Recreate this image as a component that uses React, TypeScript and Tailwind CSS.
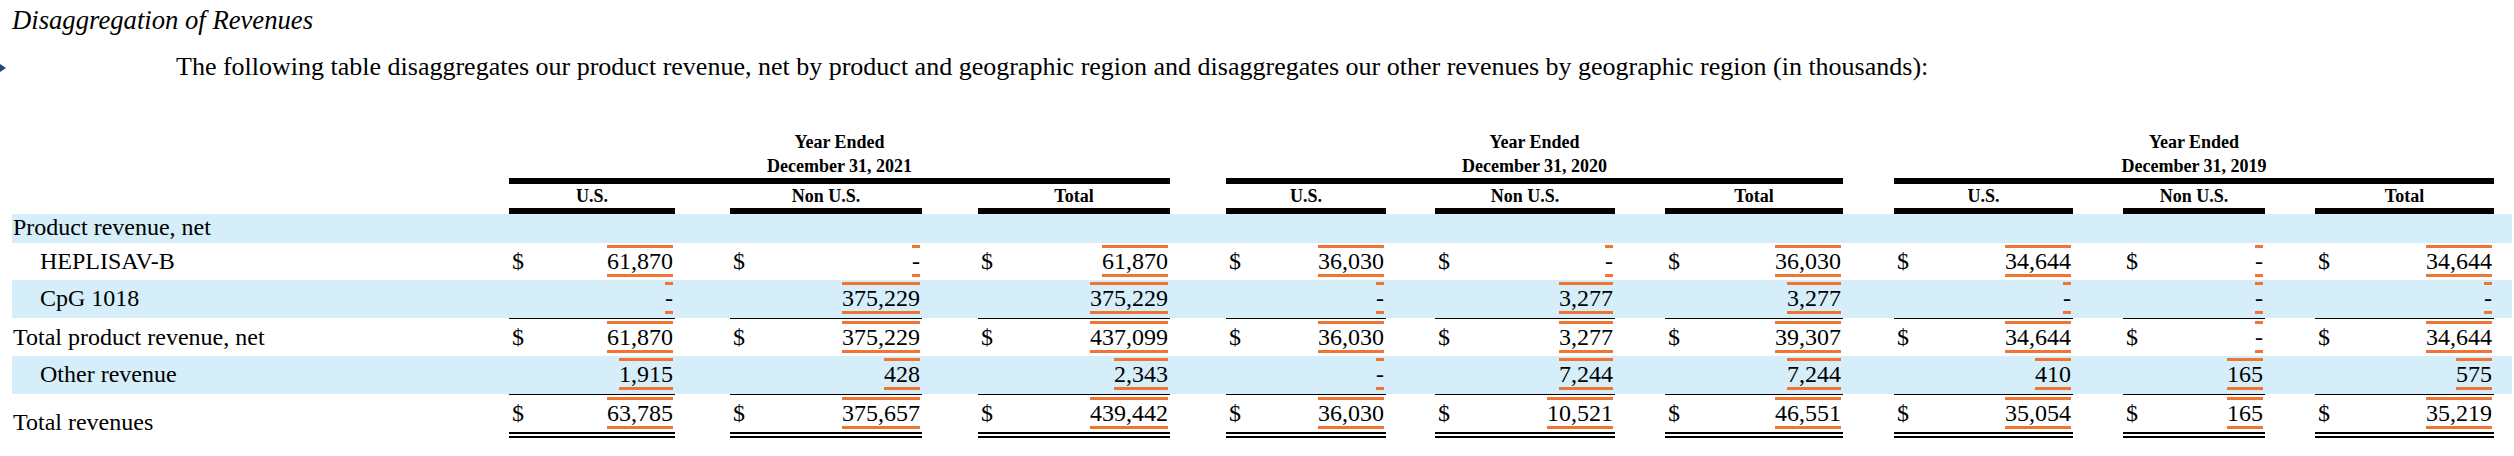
import clsx from "clsx";

const GRID =
  "grid grid-cols-[497px_166px_55px_192px_56px_192px_56px_160px_49px_180px_50px_178px_51px_179px_50px_142px_50px_179px_18px]";

const BAND = "bg-[#d5eefa]";

type Row = {
  label: string;
  indent?: boolean;
  band?: boolean;
  dollar?: boolean;
  top?: boolean;
  total?: boolean;
  values: string[];
};

const rows: Row[] = [
  {
    label: "HEPLISAV-B",
    indent: true,
    dollar: true,
    values: ["61,870", "-", "61,870", "36,030", "-", "36,030", "34,644", "-", "34,644"],
  },
  {
    label: "CpG 1018",
    indent: true,
    band: true,
    values: ["-", "375,229", "375,229", "-", "3,277", "3,277", "-", "-", "-"],
  },
  {
    label: "Total product revenue, net",
    dollar: true,
    top: true,
    values: ["61,870", "375,229", "437,099", "36,030", "3,277", "39,307", "34,644", "-", "34,644"],
  },
  {
    label: "Other revenue",
    indent: true,
    band: true,
    values: ["1,915", "428", "2,343", "-", "7,244", "7,244", "410", "165", "575"],
  },
  {
    label: "Total revenues",
    dollar: true,
    top: true,
    total: true,
    values: ["63,785", "375,657", "439,442", "36,030", "10,521", "46,551", "35,054", "165", "35,219"],
  },
];

const groups = ["December 31, 2021", "December 31, 2020", "December 31, 2019"];
const heads = ["U.S.", "Non U.S.", "Total"];

function Cell({ v, row }: { v: string; row: Row }) {
  return (
    <div
      className={clsx(
        "flex justify-between items-start pl-[3px] pr-[2px] pt-[2px]",
        row.top && "border-t border-black",
        row.total && "border-b-[6px] border-double border-black"
      )}
    >
      <span className="border-y-[3px] border-transparent leading-[26px]">
        {row.dollar ? "$" : ""}
      </span>
      <span className="border-y-[3px] border-[#f07532] leading-[26px]">{v}</span>
    </div>
  );
}

function DataRow({ row }: { row: Row }) {
  const height = row.total ? "h-[44px]" : row.label === "HEPLISAV-B" ? "h-[37px]" : "h-[38px]";
  const labelPad = row.total ? "pt-[15px]" : row.top ? "pt-[6px]" : "pt-[5px]";
  return (
    <div className={clsx(GRID, height, row.band && BAND)}>
      <div className={clsx("leading-[26px]", labelPad, row.indent ? "pl-[28px]" : "pl-[1px]")}>
        {row.label}
      </div>
      {row.values.map((v, i) => [
        <Cell key={"c" + i} v={v} row={row} />,
        <div key={"s" + i} />,
      ])}
    </div>
  );
}

export default function App() {
  return (
    <div className="w-[2514px] h-[456px] bg-white text-black font-['Liberation_Serif',serif] overflow-hidden">
      <div className="pt-[4px] pl-[12px] text-[26.67px] italic leading-[32px]">
        Disaggregation of Revenues
      </div>

      <div className="flex mt-[16px] h-[30px] text-[26px] leading-[30px]">
        <svg width="6" height="8" viewBox="0 0 6 8" className="mt-[12px] shrink-0">
          <path d="M0 0 L6 4 L0 8 Z" fill="#1d4a7a" />
        </svg>
        <p className="ml-[170px] whitespace-nowrap">
          The following table disaggregates our product revenue, net by product and geographic region
          and disaggregates our other revenues by geographic region (in thousands):
        </p>
      </div>

      <div className="mt-[48px] ml-[12px] w-[2500px] text-[24px]">
        {/* year headers */}
        <div className={clsx(GRID, "text-[18px] font-bold leading-[24px] text-center")}>
          <div />
          {groups.map((g, i) => [
            <div key={"g" + i} className="col-span-5 border-b-[6px] border-black">
              <div>Year Ended</div>
              <div>{g}</div>
            </div>,
            <div key={"gs" + i} />,
          ])}
        </div>

        {/* column headers */}
        <div className={clsx(GRID, "text-[18px] font-bold leading-[24px] text-center")}>
          <div />
          {[0, 1, 2].map((g) =>
            heads.map((h, i) => [
              <div key={"h" + g + i} className="border-b-[6px] border-black">
                {h}
              </div>,
              <div key={"hs" + g + i} />,
            ])
          )}
        </div>

        <div className={clsx(GRID, "h-[29px]", BAND)}>
          <div className="pl-[1px] leading-[27px]">Product revenue, net</div>
        </div>

        {rows.map((r) => (
          <DataRow key={r.label} row={r} />
        ))}
      </div>
    </div>
  );
}
